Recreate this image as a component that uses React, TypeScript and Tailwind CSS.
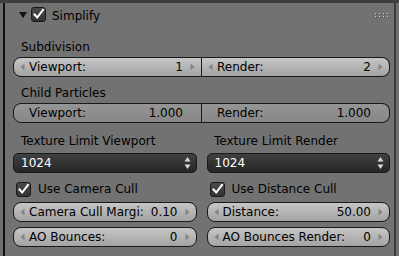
import React from "react";

const ArrowL = () => (
  <svg width="5" height="8" viewBox="0 0 5 8" className="absolute left-[6px] top-1/2 -translate-y-1/2">
    <path d="M4.5 0.5 L0.5 4 L4.5 7.5 Z" fill="#848484" />
  </svg>
);
const ArrowR = () => (
  <svg width="5" height="8" viewBox="0 0 5 8" className="absolute right-[6px] top-1/2 -translate-y-1/2">
    <path d="M0.5 0.5 L4.5 4 L0.5 7.5 Z" fill="#848484" />
  </svg>
);

function NumField({
  label,
  value,
  shape,
  slider,
}: {
  label: string;
  value: string;
  shape: "full" | "left" | "right";
  slider?: boolean;
}) {
  const round =
    shape === "full"
      ? "rounded-[8px] border"
      : shape === "left"
      ? "rounded-l-[8px] border"
      : "rounded-r-[8px] border border-l-0";
  const bg = slider
    ? "bg-gradient-to-b from-[#959595] to-[#878787]"
    : "bg-gradient-to-b from-[#c6c6c6] to-[#a3a3a3]";
  return (
    <div
      className={`relative flex-1 h-[20px] ${round} border-[#191919] ${bg} flex items-center justify-between pl-[15px] pr-[18px] text-black`}
    >
      {!slider && <ArrowL />}
      <span className="whitespace-nowrap leading-none">{label}</span>
      <span className="whitespace-nowrap leading-none">{value}</span>
      {!slider && <ArrowR />}
    </div>
  );
}

function Dropdown({ value }: { value: string }) {
  return (
    <div className="relative flex-1 h-[20px] rounded-[5px] border border-[#191919] bg-gradient-to-b from-[#404040] to-[#262626] flex items-center pl-[7px] text-white">
      <span className="leading-none">{value}</span>
      <svg width="7" height="14" viewBox="0 0 7 14" className="absolute right-[5px] top-1/2 -translate-y-1/2">
        <path d="M3.5 1 L6.5 5.5 L0.5 5.5 Z" fill="#d8d8d8" />
        <path d="M3.5 13 L6.5 8.5 L0.5 8.5 Z" fill="#d8d8d8" />
      </svg>
    </div>
  );
}

function CheckBox() {
  return (
    <div className="relative w-[15px] h-[15px] rounded-[3px] border border-[#191919] bg-gradient-to-b from-[#4a4a4a] to-[#333333]">
      <svg width="15" height="15" viewBox="0 0 15 15" className="absolute -left-px -top-px">
        <path d="M3.5 7.5 L6.2 10.5 L12 3" stroke="#ffffff" strokeWidth="2" fill="none" strokeLinecap="square" />
      </svg>
    </div>
  );
}

function CheckRow({ label }: { label: string }) {
  return (
    <div className="flex-1 flex items-center h-[20px] pl-[3px] gap-[7px]">
      <CheckBox />
      <span className="leading-none text-black">{label}</span>
    </div>
  );
}

export default function App() {
  return (
    <div className="w-[399px] h-[256px] bg-[#727272] flex flex-col overflow-hidden font-['DejaVu_Sans',sans-serif] text-[12px] text-black">
      <div className="h-[3px] bg-[#3e3e3e] shrink-0" />
      <div className="flex flex-1">
        <div className="w-[3px] bg-[#6e6e6e]" />
        <div className="w-[2px] bg-[#121212]" />
        <div className="flex-1 flex flex-col pl-[8px] pr-[4px]">
          {/* header */}
          <div className="h-[26px] flex items-center relative">
            <svg width="8" height="6" viewBox="0 0 8 6" className="absolute left-[6px] top-[9px]">
              <path d="M0 0 L8 0 L4 6 Z" fill="#111111" />
            </svg>
            <div className="absolute left-[18px] top-[4px]">
              <CheckBox />
            </div>
            <span className="absolute left-[39px] top-[6px] leading-none text-[12px] mt-[1px]">Simplify</span>
            <svg width="15" height="5" viewBox="0 0 15 5" className="absolute right-[0px] top-[10px]">
              {[0, 4, 8, 12].map((x) =>
                [0, 3].map((y) => (
                  <g key={`${x}-${y}`}>
                    <rect x={x + 1} y={y + 1} width="1" height="1" fill="#4a4a4a" />
                    <rect x={x} y={y} width="1" height="1" fill="#d0d0d0" />
                  </g>
                ))
              )}
            </svg>
          </div>
          {/* Subdivision */}
          <div className="h-[20px] mt-[8px] flex items-center pl-[8px] leading-none">Subdivision</div>
          <div className="flex h-[20px]">
            <NumField label="Viewport:" value="1" shape="left" />
            <NumField label="Render:" value="2" shape="right" />
          </div>
          <div className="h-[20px] mt-[6px] flex items-center pl-[8px] leading-none">Child Particles</div>
          <div className="flex h-[20px]">
            <NumField label="Viewport:" value="1.000" shape="left" slider />
            <NumField label="Render:" value="1.000" shape="right" slider />
          </div>
          <div className="flex gap-[10px] mt-[8px]">
            <div className="flex-1 h-[20px] flex items-center pl-[8px] leading-none">Texture Limit Viewport</div>
            <div className="flex-1 h-[20px] flex items-center pl-[7px] leading-none">Texture Limit Render</div>
          </div>
          <div className="flex gap-[10px] mt-[2px]">
            <Dropdown value="1024" />
            <Dropdown value="1024" />
          </div>
          <div className="flex gap-[10px] mt-[6px]">
            <CheckRow label="Use Camera Cull" />
            <CheckRow label="Use Distance Cull" />
          </div>
          <div className="flex gap-[10px] mt-[3px]">
            <NumField label="Camera Cull Margi:" value="0.10" shape="full" />
            <NumField label="Distance:" value="50.00" shape="full" />
          </div>
          <div className="flex gap-[10px] mt-[5px]">
            <NumField label="AO Bounces:" value="0" shape="full" />
            <NumField label="AO Bounces Render:" value="0" shape="full" />
          </div>
        </div>
        <div className="w-[2px] bg-[#3a3a3a]" />
        <div className="w-[3px] bg-[#6e6e6e]" />
      </div>
    </div>
  );
}
